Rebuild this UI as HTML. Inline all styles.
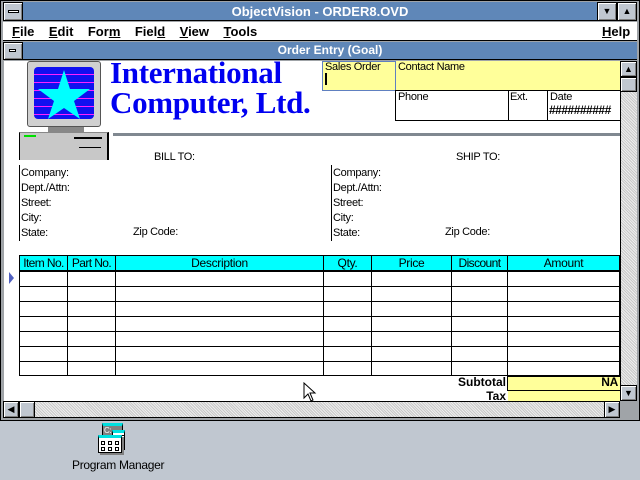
<!DOCTYPE html><html><head><style>
body{margin:0;width:640px;height:480px;background:#c0c7d0;position:relative;overflow:hidden;font-family:"Liberation Sans",sans-serif;}
div{position:absolute;box-sizing:border-box;}
.t{font-size:11px;color:#000;white-space:nowrap;letter-spacing:-0.3px;}
.dith{background:#5f87b8;}
.btn{background:#c0c7d0;border:1px solid #000;box-shadow:inset 1px 1px #fff,inset -1px -1px #808080;font-size:9px;text-align:center;}
.yel{background:#ffff9a;}
.hd{background:#00ffff;}
.hline{height:1px;background:#000;}
.vline{width:1px;background:#000;}
.sq{width:4px;height:4px;border:1px solid #000;}
</style></head><body>
<div style="left:0;top:0;width:640px;height:421px;background:#a0a4a8;border:1px solid #000;"></div>
<div class="dith" style="left:3px;top:2px;width:634px;height:19px;border-bottom:1px solid #000;"></div>
<div class="btn" style="left:3px;top:2px;width:20px;height:19px;"><div style="left:4px;top:7px;width:11px;height:3px;background:#fff;border:1px solid #000"></div></div>
<div class="t" style="left:0;width:640px;top:4px;text-align:center;color:#fff;font-weight:bold;font-size:13px;letter-spacing:0">ObjectVision - ORDER8.OVD</div>
<div class="btn" style="left:597px;top:2px;width:20px;height:19px;line-height:17px">▼</div>
<div class="btn" style="left:617px;top:2px;width:20px;height:19px;line-height:17px">▲</div>
<div style="left:3px;top:22px;width:634px;height:19px;background:#fff;border-bottom:1px solid #000"></div>
<div class="t" style="left:12px;top:24px;font-size:13px;font-weight:bold;letter-spacing:0"><u>F</u>ile&nbsp;&nbsp;&nbsp;&nbsp;<u>E</u>dit&nbsp;&nbsp;&nbsp;&nbsp;For<u>m</u>&nbsp;&nbsp;&nbsp;&nbsp;Fiel<u>d</u>&nbsp;&nbsp;&nbsp;&nbsp;<u>V</u>iew&nbsp;&nbsp;&nbsp;&nbsp;<u>T</u>ools</div>
<div class="t" style="left:602px;top:24px;font-size:13px;font-weight:bold;letter-spacing:0"><u>H</u>elp</div>
<div class="dith" style="left:3px;top:42px;width:634px;height:18px;border-bottom:1px solid #000"></div>
<div class="btn" style="left:3px;top:42px;width:20px;height:18px;"><div style="left:5px;top:6px;width:7px;height:3px;background:#fff;border:1px solid #000"></div></div>
<div class="t" style="left:0;width:660px;top:43px;text-align:center;color:#fff;font-weight:bold;font-size:12px;letter-spacing:0">Order Entry (Goal)</div>
<div style="left:4px;top:61px;width:616px;height:340px;background:#fff"></div>
<div style="left:27px;top:61px;width:74px;height:66px;background:#d0d0d0;border:1px solid #555;border-radius:3px"></div>
<div style="left:34px;top:67px;width:60px;height:52px;background:#1010f0;border-radius:4px;background-image:repeating-linear-gradient(#1010f0 0 7px,#ff20ff 7px 8px)"></div>
<svg style="position:absolute;left:38px;top:69px" width="52" height="50"><polygon points="26,1 32,20 52,20 36,32 42,50 26,39 10,50 16,32 0,20 20,20" fill="#00ffff"/></svg>
<div style="left:48px;top:127px;width:36px;height:5px;background:#888"></div>
<div style="left:19px;top:132px;width:90px;height:28px;background:#c8c8c8;border-left:1px solid #000;border-right:2px solid #000;border-top:1px solid #888"></div>
<div style="left:24px;top:135px;width:12px;height:2px;background:#00e000"></div>
<div style="left:74px;top:137px;width:28px;height:2px;background:#000"></div>
<div style="left:79px;top:147px;width:22px;height:1px;background:#000"></div>
<div style="left:110px;top:58px;font-family:'Liberation Serif',serif;font-size:31px;font-weight:bold;color:#0000f0;line-height:30px;letter-spacing:-0.3px">International<br>Computer, Ltd.</div>
<div style="left:113px;top:133px;width:507px;height:3px;background:#808890"></div>
<div class="yel" style="left:322px;top:61px;width:74px;height:30px;border:1px solid #6080c0"></div>
<div class="t" style="left:325px;top:61px">Sales Order</div>
<div style="left:325px;top:73px;width:2px;height:12px;background:#000"></div>
<div class="yel" style="left:396px;top:61px;width:224px;height:30px;border-bottom:1px solid #000"></div>
<div class="t" style="left:398px;top:61px">Contact Name</div>
<div style="left:395px;top:90px;width:225px;height:31px;border:1px solid #000;border-right:none"></div>
<div class="vline" style="left:508px;top:90px;height:31px"></div>
<div class="vline" style="left:547px;top:90px;height:31px"></div>
<div class="t" style="left:398px;top:91px">Phone</div>
<div class="t" style="left:510px;top:91px">Ext.</div>
<div class="t" style="left:550px;top:91px">Date</div>
<div class="t" style="left:549px;top:103px;font-weight:bold;font-size:12px;overflow:hidden;width:71px;letter-spacing:-0.5px">##########</div>
<div class="t" style="left:154px;top:151px">BILL TO:</div>
<div class="t" style="left:456px;top:151px">SHIP TO:</div>
<div class="vline" style="left:19px;top:165px;height:76px"></div>
<div class="vline" style="left:331px;top:165px;height:76px"></div>
<div class="t" style="left:21px;top:166px;line-height:15px">Company:<br>Dept./Attn:<br>Street:<br>City:<br>State:</div>
<div class="t" style="left:333px;top:166px;line-height:15px">Company:<br>Dept./Attn:<br>Street:<br>City:<br>State:</div>
<div class="t" style="left:133px;top:226px">Zip Code:</div>
<div class="t" style="left:445px;top:226px">Zip Code:</div>
<div style="left:19px;top:255px;width:601px;height:121px;border:1px solid #000;background:repeating-linear-gradient(transparent 0 14px,#000 14px 15px);background-position:0 1px"></div>
<div class="hd" style="left:20px;top:256px;width:599px;height:14px"></div>
<div class="hline" style="left:19px;top:270px;width:601px"></div>
<div class="vline" style="left:67px;top:255px;height:121px"></div>
<div class="vline" style="left:115px;top:255px;height:121px"></div>
<div class="vline" style="left:323px;top:255px;height:121px"></div>
<div class="vline" style="left:371px;top:255px;height:121px"></div>
<div class="vline" style="left:451px;top:255px;height:121px"></div>
<div class="vline" style="left:507px;top:255px;height:136px"></div>
<div class="t" style="left:20px;top:256px;width:47px;text-align:center;font-size:12px;letter-spacing:-0.6px">Item No.</div>
<div class="t" style="left:68px;top:256px;width:47px;text-align:center;font-size:12px;letter-spacing:-0.6px">Part No.</div>
<div class="t" style="left:116px;top:256px;width:207px;text-align:center;font-size:12px">Description</div>
<div class="t" style="left:324px;top:256px;width:47px;text-align:center;font-size:12px">Qty.</div>
<div class="t" style="left:372px;top:256px;width:79px;text-align:center;font-size:12px">Price</div>
<div class="t" style="left:452px;top:256px;width:55px;text-align:center;font-size:12px;letter-spacing:-0.6px">Discount</div>
<div class="t" style="left:508px;top:256px;width:111px;text-align:center;font-size:12px">Amount</div>
<svg style="position:absolute;left:9px;top:272px" width="6" height="12"><polygon points="0,0 5,6 0,12" fill="#5060c0"/></svg>
<div class="yel" style="left:508px;top:376px;width:112px;height:25px;border-top:1px solid #000"></div>
<div class="hline" style="left:508px;top:390px;width:112px"></div>
<div class="t" style="left:440px;top:375px;width:66px;text-align:right;font-weight:bold;font-size:12px;letter-spacing:0">Subtotal</div>
<div class="t" style="left:440px;top:389px;width:66px;text-align:right;font-weight:bold;font-size:12px;letter-spacing:0;height:12px;overflow:hidden">Tax</div>
<div class="t" style="left:560px;top:375px;width:58px;text-align:right;font-weight:bold;font-size:12px">NA</div>
<svg style="position:absolute;left:303px;top:382px" width="14" height="22"><polygon points="1,1 1,16 5,12 8,19 10,18 7,11 12,11" fill="#fff" stroke="#000"/></svg>
<div style="left:620px;top:61px;width:17px;height:340px;background:#d8d8d8;border-left:1px solid #000;background-image:repeating-linear-gradient(45deg,#c8c8c8 0 1px,#eee 1px 2px)"></div>
<div class="btn" style="left:620px;top:61px;width:17px;height:16px;line-height:14px">▲</div>
<div class="btn" style="left:620px;top:77px;width:17px;height:15px"></div>
<div class="btn" style="left:620px;top:385px;width:17px;height:16px;line-height:14px">▼</div>
<div style="left:3px;top:401px;width:617px;height:17px;background:#d8d8d8;border-top:1px solid #000;border-bottom:1px solid #000;background-image:repeating-linear-gradient(45deg,#c8c8c8 0 1px,#eee 1px 2px)"></div>
<div class="btn" style="left:3px;top:401px;width:16px;height:17px;line-height:15px">◀</div>
<div class="btn" style="left:19px;top:401px;width:16px;height:17px"></div>
<div class="btn" style="left:604px;top:401px;width:16px;height:17px;line-height:15px">▶</div>
<div style="left:102px;top:423px;width:21px;height:16px;background:#808080;border:1px solid #000;border-top:3px solid #00e0e0"></div>
<div class="t" style="left:104px;top:426px;color:#fff;font-size:8px">C:</div>
<div style="left:112px;top:430px;width:13px;height:20px;background:#fff;border:1px solid #000;border-top:3px solid #00e0e0;background-image:repeating-linear-gradient(#fff 0 2px,#000 2px 3px)"></div>
<div style="left:98px;top:435px;width:24px;height:18px;background:#fff;border:1px solid #000;border-top:3px solid #00e0e0;box-shadow:2px 2px #808080"></div>
<div class="sq" style="left:101px;top:441px"></div><div class="sq" style="left:108px;top:441px"></div><div class="sq" style="left:115px;top:441px"></div>
<div class="sq" style="left:101px;top:447px"></div><div class="sq" style="left:108px;top:447px"></div><div class="sq" style="left:115px;top:447px"></div>
<div class="t" style="left:72px;top:458px;font-size:12px">Program Manager</div>
</body></html>
